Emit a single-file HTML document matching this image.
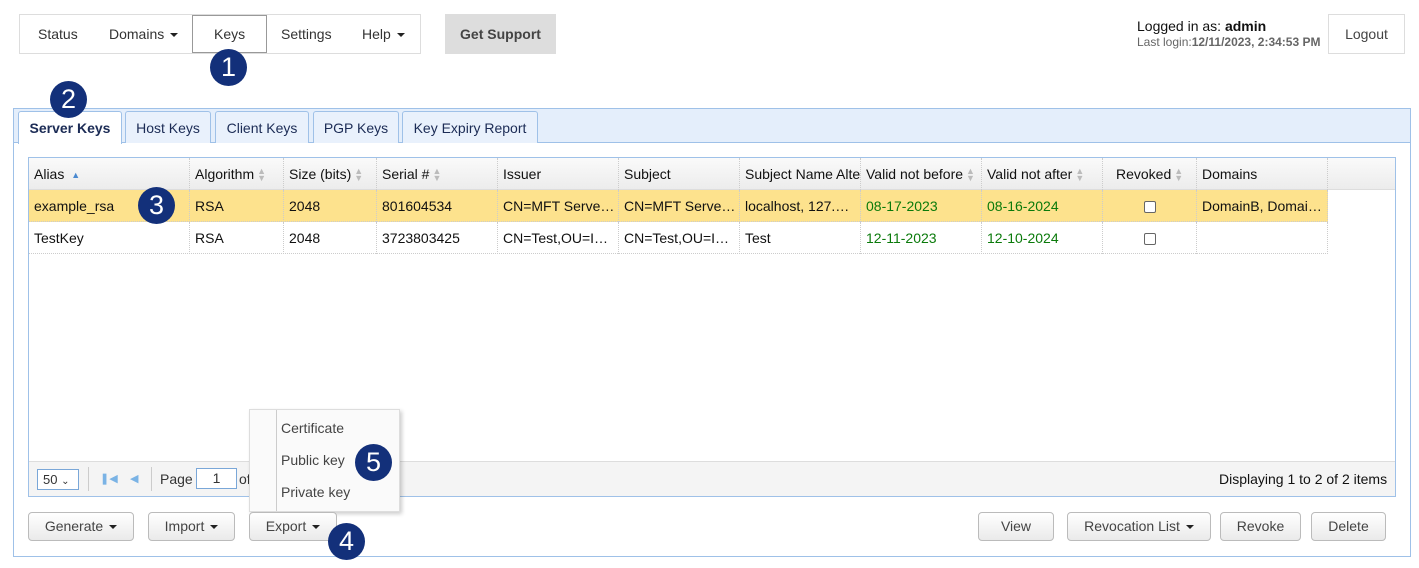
<!DOCTYPE html><html><head><style>
*{box-sizing:border-box;margin:0;padding:0}
body{width:1419px;height:568px;background:#fff;font-family:"Liberation Sans",sans-serif;font-size:14px;color:#333;position:relative;overflow:hidden}
.a{position:absolute}
.nav{left:19px;top:14px;width:402px;height:40px;border:1px solid #ddd}
.ni{top:26px;color:#333}
.car{display:inline-block;width:0;height:0;border-left:4px solid transparent;border-right:4px solid transparent;border-top:4px solid #222;vertical-align:middle;margin-left:6px}
.circ{width:37px;height:37px;border-radius:50%;background:#13307a;color:#fff;font-size:27px;text-align:center;line-height:37px}
.tab{top:111px;height:32px;border:1px solid #9fc1e8;border-bottom:none;border-radius:3px 3px 0 0;background:#e9f1fc;color:#1b2b55;padding:8px 0 0;text-align:center;font-size:14px;white-space:nowrap}
.cell{position:absolute;height:32px;line-height:32px;padding-left:5px;border-right:1px dotted #ccc;white-space:nowrap;overflow:hidden;font-size:14px;color:#111}
.srt{display:inline-block;font-size:9px;color:#bbb;vertical-align:middle;margin-left:3px;line-height:7px}
.btn{top:512px;height:29px;border:1px solid #bbb;border-radius:4px;background:linear-gradient(#fff,#eaeaea);text-align:center;line-height:27px;color:#444}
.g{color:#0a7a0a}
.cb{display:inline-block;width:12px;height:12px;border:1px solid #666;border-radius:2px;vertical-align:middle;background:#fff}
</style></head><body>
<div class="a nav"></div>
<div class="a" style="left:192px;top:15px;width:75px;height:38px;border:1px solid #999"></div>
<div class="a ni" style="left:38px">Status</div>
<div class="a ni" style="left:109px">Domains<span class="car"></span></div>
<div class="a ni" style="left:214px">Keys</div>
<div class="a ni" style="left:281px">Settings</div>
<div class="a ni" style="left:362px">Help<span class="car"></span></div>
<div class="a" style="left:445px;top:14px;width:111px;height:40px;background:#ddd;font-weight:bold;text-align:center;line-height:40px;color:#444">Get Support</div>
<div class="a" style="left:1137px;top:18px;font-size:14px;color:#111">Logged in as: <b>admin</b></div>
<div class="a" style="left:1137px;top:35px;font-size:12px;color:#666">Last login:<b>12/11/2023, 2:34:53 PM</b></div>
<div class="a" style="left:1328px;top:14px;width:77px;height:40px;border:1px solid #ddd;text-align:center;line-height:38px;color:#444">Logout</div>

<div class="a" style="left:13px;top:108px;width:1398px;height:449px;border:1px solid #9fc1e8"></div>
<div class="a" style="left:14px;top:109px;width:1396px;height:34px;background:#e4eefb;border-bottom:1px solid #9fc1e8"></div>
<div class="a tab" style="left:18px;width:104px;background:#fff;height:33px;font-weight:bold;color:#1b2b55">Server Keys</div>
<div class="a tab" style="left:125px;width:86px">Host Keys</div>
<div class="a tab" style="left:215px;width:94px">Client Keys</div>
<div class="a tab" style="left:313px;width:86px">PGP Keys</div>
<div class="a tab" style="left:402px;width:136px">Key Expiry Report</div>

<div class="a" style="left:28px;top:157px;width:1368px;height:340px;border:1px solid #9fc1e8"></div>
<div class="a" style="left:29px;top:158px;width:1366px;height:32px;background:linear-gradient(#fafafa,#ececec);border-bottom:1px solid #ddd"></div>
<div class="a" style="left:29px;top:190px;width:1299px;height:32px;background:#fde28d"></div>
<div class="a" style="left:29px;top:253px;width:1299px;height:1px;border-top:1px dotted #ccc"></div>
<div class="a" style="left:29px;top:221px;width:1299px;height:1px;border-top:1px dotted #ccc"></div>
<div id="g"></div>
<div class="a" style="left:29px;top:461px;width:1366px;height:35px;background:#f4f4f4;border-top:1px solid #ddd"></div>
<div class="a" style="left:37px;top:469px;width:42px;height:21px;border:1px solid #7aa7d8;background:#fff;font-size:13px;line-height:19px;padding-left:5px">50 <span style="font-size:10px">&#8964;</span></div>
<div class="a" style="left:88px;top:467px;width:1px;height:24px;background:#ccc"></div>
<div class="a" style="left:100px;top:472px;color:#7ab3e5;font-size:11px">&#10074;&#9664;</div>
<div class="a" style="left:130px;top:472px;color:#7ab3e5;font-size:11px">&#9664;</div>
<div class="a" style="left:151px;top:467px;width:1px;height:24px;background:#ccc"></div>
<div class="a" style="left:160px;top:471px">Page</div>
<div class="a" style="left:196px;top:468px;width:41px;height:21px;border:1px solid #7aa7d8;background:#fff;text-align:center;line-height:19px">1</div>
<div class="a" style="left:239px;top:471px">of</div>
<div class="a" style="left:1219px;top:471px;color:#111">Displaying 1 to 2 of 2 items</div>

<div class="a" style="left:249px;top:409px;width:151px;height:103px;background:#fafafa;border:1px solid #ddd;box-shadow:2px 2px 4px rgba(0,0,0,.2)"></div>
<div class="a" style="left:276px;top:410px;width:1px;height:101px;background:#ccc"></div>
<div class="a" style="left:281px;top:420px;color:#444">Certificate</div>
<div class="a" style="left:281px;top:452px;color:#444">Public key</div>
<div class="a" style="left:281px;top:484px;color:#444">Private key</div>

<div class="a btn" style="left:28px;width:106px">Generate<span class="car"></span></div>
<div class="a btn" style="left:148px;width:87px">Import<span class="car"></span></div>
<div class="a btn" style="left:249px;width:88px">Export<span class="car"></span></div>
<div class="a btn" style="left:978px;width:76px">View</div>
<div class="a btn" style="left:1067px;width:144px">Revocation List<span class="car"></span></div>
<div class="a btn" style="left:1220px;width:81px">Revoke</div>
<div class="a btn" style="left:1311px;width:75px">Delete</div>

<div class="a circ" style="left:210px;top:49px">1</div>
<div class="a circ" style="left:50px;top:81px">2</div>
<div class="a circ" style="left:138px;top:187px">3</div>
<div class="a circ" style="left:328px;top:523px">4</div>
<div class="a circ" style="left:355px;top:444px">5</div>
<script>
var cols=[[29,161],[190,94],[284,93],[377,121],[498,121],[619,121],[740,121],[861,121],[982,121],[1103,94],[1197,131]];
var h=['Alias <span class="srt" style="color:#4a89d0">&#9650;</span>','Algorithm<span class="srt">&#9650;<br>&#9660;</span>','Size (bits)<span class="srt">&#9650;<br>&#9660;</span>','Serial #<span class="srt">&#9650;<br>&#9660;</span>','Issuer','Subject','Subject Name Alte','Valid not before<span class="srt">&#9650;<br>&#9660;</span>','Valid not after<span class="srt">&#9650;<br>&#9660;</span>','<span style="padding-left:8px">Revoked</span><span class="srt">&#9650;<br>&#9660;</span>','Domains'];
var r=[['example_rsa','RSA','2048','801604534','CN=MFT Serve…','CN=MFT Serve…','localhost, 127.…','<span class="g">08-17-2023</span>','<span class="g">08-16-2024</span>','<div style="text-align:center;padding-right:5px"><span class="cb"></span></div>','DomainB, Domai…'],
['TestKey','RSA','2048','3723803425','CN=Test,OU=I…','CN=Test,OU=I…','Test','<span class="g">12-11-2023</span>','<span class="g">12-10-2024</span>','<div style="text-align:center;padding-right:5px"><span class="cb"></span></div>','']];
var s='';
[h].concat(r).forEach(function(row,i){row.forEach(function(t,j){s+='<div class="cell" style="left:'+cols[j][0]+'px;top:'+(158+i*32)+'px;width:'+cols[j][1]+'px">'+t+'</div>';});});
document.getElementById('g').innerHTML=s;
</script>
</body></html>
